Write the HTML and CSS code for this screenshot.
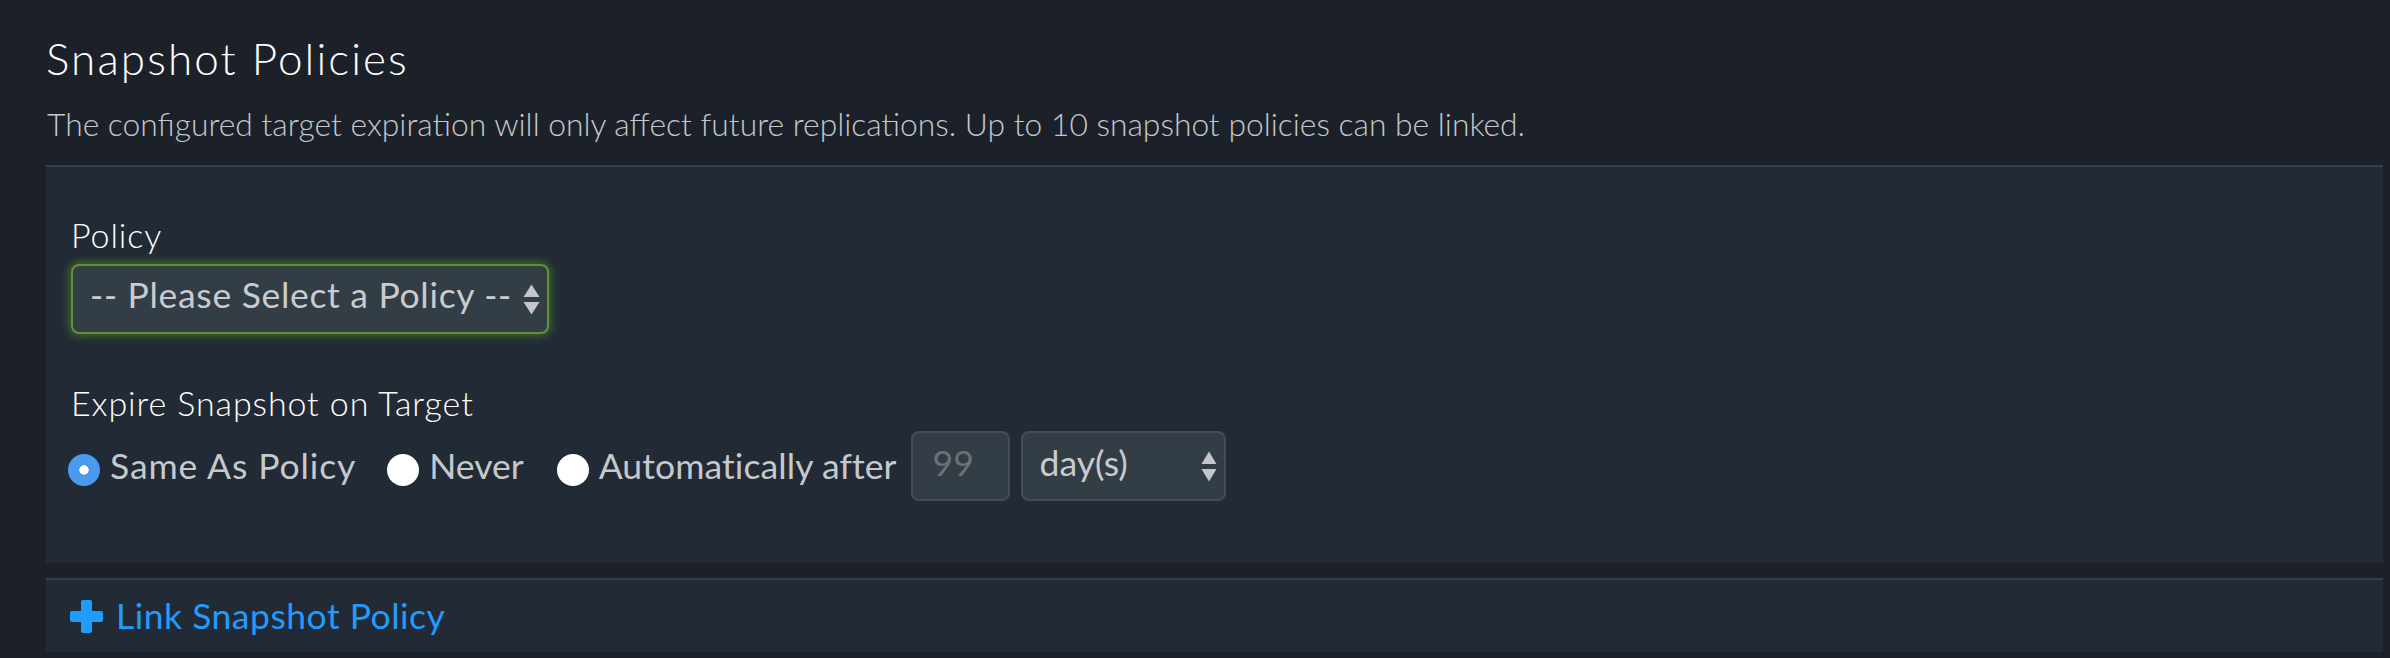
FILE: index.html
```html
<!DOCTYPE html>
<html lang="en">
<head>
<meta charset="utf-8">
<title>Snapshot Policies</title>
<link rel="stylesheet" href="styles.css">
</head>
<body>
<div class="page">
  <h2 class="title">Snapshot Policies</h2>
  <p class="desc">The configured target expiration will only affect future replications. Up to 10 snapshot policies can be linked.</p>

  <section class="panel policy-panel">
    <div class="field">
      <div class="label">Policy</div>
      <div class="select select-policy is-focused">
        <span class="select-text">-- Please Select a Policy --</span>
        <svg class="arrows" width="17" height="31" viewBox="0 0 17 31" aria-hidden="true"><path d="M8.5 0.5 L16.5 13 L0.5 13 Z" fill="#c4c6c9"/><path d="M0.5 18 L16.5 18 L8.5 30.5 Z" fill="#c4c6c9"/></svg>
      </div>
    </div>

    <div class="field field-expire">
      <div class="label">Expire Snapshot on Target</div>
      <div class="radios">
        <label class="radio"><span class="dot is-checked"></span><span class="radio-text radio-same">Same As Policy</span></label>
        <label class="radio"><span class="dot"></span><span class="radio-text">Never</span></label>
        <label class="radio radio-auto"><span class="dot"></span><span class="radio-text">Automatically after</span></label>
        <div class="input num">99</div>
        <div class="select select-unit">
          <span class="select-text">day(s)</span>
          <svg class="arrows" width="16" height="31" viewBox="0 0 16 31" aria-hidden="true"><path d="M8 0.5 L15.5 13 L0.5 13 Z" fill="#c4c6c9"/><path d="M0.5 18 L15.5 18 L8 30.5 Z" fill="#c4c6c9"/></svg>
        </div>
      </div>
    </div>
  </section>

  <section class="panel link-panel">
    <a class="link" href="#">
      <svg class="plus" width="33" height="33" viewBox="0 0 33 33" aria-hidden="true"><path d="M13 0h7a2 2 0 0 1 2 2v9h9a2 2 0 0 1 2 2v7a2 2 0 0 1-2 2h-9v9a2 2 0 0 1-2 2h-7a2 2 0 0 1-2-2v-9h-9a2 2 0 0 1-2-2v-7a2 2 0 0 1 2-2h9v-9a2 2 0 0 1 2-2z" fill="#209cff"/></svg>
      <span>Link Snapshot Policy</span>
    </a>
  </section>
</div>
</body>
</html>
```

FILE: styles.css
```css
html, body {
  margin: 0;
  padding: 0;
  background: #1c2129;
}

body {
  font-family: "Lato", "Noto Sans", sans-serif;
  color: #ffffff;
}

.page {
  padding: 32px 7px 6px 46px;
}

.title {
  margin: 0;
  font-size: 44px;
  line-height: 1.2;
  font-weight: 300;
  letter-spacing: 2.1px;
  color: #ffffff;
}

.desc {
  margin: 20px 0 0 1px;
  font-size: 31.8px;
  line-height: 1.2;
  font-weight: 300;
  color: #c4c8cc;
}

.panel {
  background: #222b35;
  border-top: 2px solid #373f48;
}

.policy-panel {
  margin-top: 22px;
  padding: 48.4px 25px 62px 25px;
}

.label {
  font-size: 34px;
  line-height: 1.2;
  font-weight: 300;
  letter-spacing: 0.9px;
  color: #ffffff;
}

.field-expire {
  margin-top: 48.4px;
}

.select {
  display: flex;
  align-items: center;
  box-sizing: border-box;
  height: 70px;
  margin-top: 8px;
  background: #333d46;
  border: 2px solid #444d56;
  border-radius: 8px;
  color: #c9cbce;
  font-size: 35.5px;
  line-height: 1.2;
  padding-bottom: 7px;
}

.select-policy {
  width: 478px;
  padding-left: 17px;
  padding-right: 7px;
  justify-content: space-between;
  letter-spacing: 0.7px;
}

.select-policy .arrows {
  margin-top: 7px;
}

.is-focused {
  border-color: #5f9430;
  box-shadow: 0 0 8px 2px rgba(110, 180, 50, 0.45);
}

.radios {
  display: flex;
  align-items: center;
  height: 70px;
  margin-top: 8px;
  margin-left: -3px;
}

.radio {
  display: flex;
  align-items: center;
  margin-right: 31px;
  font-size: 35.5px;
  line-height: 1.2;
  color: #c6c9cc;
}

.radio-same {
  letter-spacing: 0.9px;
}

.radio-auto {
  margin-left: 2px;
  margin-right: 14px;
  letter-spacing: 0.1px;
}

.dot {
  box-sizing: border-box;
  flex: none;
  width: 32px;
  height: 32px;
  margin-top: 7px;
  margin-right: 10px;
  border-radius: 50%;
  background: #ffffff;
}

.dot.is-checked {
  border: 11px solid #4a9bef;
  background-clip: padding-box;
  background-color: #ffffff;
}

.input {
  box-sizing: border-box;
  display: flex;
  align-items: center;
  flex: none;
  width: 99px;
  height: 70px;
  padding: 0 0 7px 20px;
  background: #333d46;
  border: 2px solid #444d56;
  border-radius: 8px;
  font-size: 35.5px;
  line-height: 1.2;
  color: #6b7177;
}

.select-unit {
  flex: none;
  width: 205px;
  margin-top: 0;
  margin-left: 11px;
  padding-left: 17px;
  padding-right: 7px;
  justify-content: space-between;
}

.select-unit .arrows {
  margin-top: 7px;
}

.link-panel {
  margin-top: 15px;
  height: 72px;
  display: flex;
  align-items: center;
  padding-left: 24px;
}

.link {
  display: flex;
  align-items: center;
  gap: 13px;
  font-size: 35.5px;
  line-height: 1.2;
  letter-spacing: 0.5px;
  color: #209cff;
  text-decoration: none;
}

.plus {
  flex: none;
}
```
